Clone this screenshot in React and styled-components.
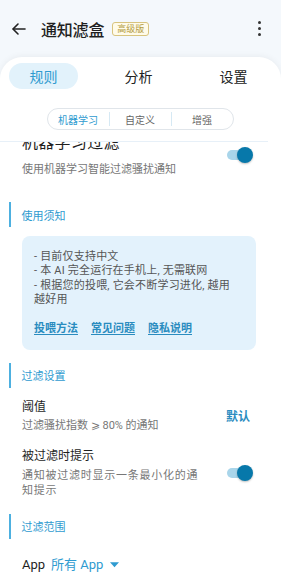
import React, { useLayoutEffect, useRef } from "react";
import styled, { createGlobalStyle } from "styled-components";

const GlobalStyle = createGlobalStyle`
  html, body {
    margin: 0;
    padding: 0;
    background: #f4f8fc;
    font-family: "Roboto", "Noto Sans CJK SC", sans-serif;
  }
  * { box-sizing: border-box; }
`;

const Toggle = () => (
  <Switch>
    <Track />
    <Thumb />
  </Switch>
);

export default function App() {
  const scrollRef = useRef(null);

  useLayoutEffect(() => {
    if (scrollRef.current) scrollRef.current.scrollTop = 10;
  }, []);

  return (
    <Page>
      <GlobalStyle />
      <TopBar>
        <IconButton>
          <svg width="16" height="16" viewBox="0 0 24 24" fill="none" stroke="#222" strokeWidth="2.4" strokeLinecap="round" strokeLinejoin="round">
            <path d="M21 12H3.5" />
            <path d="M10.5 4.5 3 12l7.5 7.5" />
          </svg>
        </IconButton>
        <Title>通知滤盒</Title>
        <Badge>高级版</Badge>
        <Spacer />
        <MenuDots>
          <span />
          <span />
          <span />
        </MenuDots>
      </TopBar>

      <Card>
        <Header>
          <Tabs>
            <Tab active>规则</Tab>
            <Tab>分析</Tab>
            <Tab>设置</Tab>
          </Tabs>
          <Segmented>
            <Segment active>机器学习</Segment>
            <Divider />
            <Segment>自定义</Segment>
            <Divider />
            <Segment>增强</Segment>
          </Segmented>
        </Header>

        <Scroll ref={scrollRef}>
          <List>
            <Row>
              <RowText>
                <BigTitle>机器学习过滤</BigTitle>
                <Sub gap={8}>使用机器学习智能过滤骚扰通知</Sub>
              </RowText>
              <Toggle />
            </Row>

            <Section top={25}>使用须知</Section>

            <InfoBox>
              <InfoText>
                - 目前仅支持中文
                <br />- 本 AI 完全运行在手机上, 无需联网
                <br />- 根据您的投喂, 它会不断学习进化, 越用越好用
              </InfoText>
              <Links>
                <LinkText>投喂方法</LinkText>
                <LinkText>常见问题</LinkText>
                <LinkText>隐私说明</LinkText>
              </Links>
            </InfoBox>

            <Section top={13}>过滤设置</Section>

            <Row top={11}>
              <RowText>
                <ItemTitle>阈值</ItemTitle>
                <Sub gap={3}>过滤骚扰指数 ⩾ 80% 的通知</Sub>
              </RowText>
              <Action>默认</Action>
            </Row>

            <Row top={15}>
              <RowText narrow>
                <ItemTitle>被过滤时提示</ItemTitle>
                <Sub gap={4} wide>通知被过滤时显示一条最小化的通知提示</Sub>
              </RowText>
              <Toggle />
            </Row>

            <Section top={16}>过滤范围</Section>

            <AppRow>
              <span>App</span>
              <Picker>
                所有 App
                <svg width="9" height="6" viewBox="0 0 10 6">
                  <path d="M0 0h10L5 5.5z" fill="#2f9bd0" />
                </svg>
              </Picker>
            </AppRow>
            <BottomRule />
          </List>
        </Scroll>
      </Card>
    </Page>
  );
}

const Page = styled.div`
  height: 100vh;
  display: flex;
  flex-direction: column;
  overflow: hidden;
`;

const TopBar = styled.div`
  height: 57px;
  flex-shrink: 0;
  display: flex;
  align-items: center;
  padding: 0 12px 0 10px;
`;

const IconButton = styled.div`
  width: 18px;
  height: 18px;
  display: flex;
  align-items: center;
  justify-content: center;
  margin-right: 13px;
`;

const Title = styled.div`
  font-size: 16px;
  font-weight: 500;
  color: #1f1f1f;
  letter-spacing: -0.2px;
`;

const Badge = styled.div`
  margin-left: 8px;
  border: 1px solid #d8c47e;
  background: #fffbe9;
  color: #b49b42;
  border-radius: 3px;
  font-size: 9px;
  line-height: 12px;
  padding: 0 4px;
`;

const Spacer = styled.div`
  flex: 1;
`;

const MenuDots = styled.div`
  display: flex;
  flex-direction: column;
  gap: 2.5px;
  margin-right: 8px;
  span {
    width: 3.5px;
    height: 3.5px;
    border-radius: 50%;
    background: #333;
  }
`;

const Card = styled.div`
  flex: 1;
  min-height: 0;
  background: #fff;
  border-radius: 22px 22px 0 0;
  box-shadow: 0 -1px 6px rgba(0, 0, 0, 0.05);
  display: flex;
  flex-direction: column;
  overflow: hidden;
`;

const Header = styled.div`
  flex-shrink: 0;
  padding: 6px 0 11px;
  margin-right: 13px;
  border-bottom: 1px solid #e7f0f8;
`;

const Tabs = styled.div`
  display: flex;
  justify-content: space-between;
  padding-left: 9px;
`;

const Tab = styled.div`
  width: 69px;
  height: 26px;
  border-radius: 13px;
  display: flex;
  align-items: center;
  justify-content: center;
  font-size: 14px;
  color: ${(p) => (p.active ? "#2f9bd0" : "#222")};
  background: ${(p) => (p.active ? "#e2f2fb" : "transparent")};
`;

const Segmented = styled.div`
  width: 187px;
  height: 22px;
  margin: 19px auto 0;
  border: 1px solid #e0e5ea;
  border-radius: 11px;
  display: flex;
  align-items: center;
  position: relative;
  left: 6px;
`;

const Segment = styled.div`
  flex: 1;
  text-align: center;
  font-size: 10px;
  color: ${(p) => (p.active ? "#2f9bd0" : "#666")};
`;

const Divider = styled.div`
  width: 1px;
  height: 14px;
  background: #d6e9f4;
`;

const Scroll = styled.div`
  flex: 1;
  min-height: 0;
  overflow: hidden;
`;

const List = styled.div`
  padding-bottom: 40px;
`;

const Row = styled.div`
  display: flex;
  align-items: center;
  justify-content: space-between;
  padding: 0 28px 0 22px;
  margin-top: ${(p) => p.top || 0}px;
`;

const RowText = styled.div`
  display: flex;
  flex-direction: column;
  max-width: ${(p) => (p.narrow ? "182px" : "none")};
`;

const BigTitle = styled.div`
  font-size: 16px;
  line-height: 22px;
  color: #1f1f1f;
  letter-spacing: 0.3px;
`;

const ItemTitle = styled.div`
  font-size: 12px;
  line-height: 16px;
  color: #1f1f1f;
`;

const Sub = styled.div`
  margin-top: ${(p) => p.gap}px;
  font-size: 11px;
  letter-spacing: ${(p) => (p.wide ? "0.75px" : "0")};
  line-height: 15px;
  color: #777;
`;

const Switch = styled.div`
  position: relative;
  width: 26px;
  height: 16px;
  flex-shrink: 0;
`;

const Track = styled.div`
  position: absolute;
  left: 0;
  top: 3px;
  width: 23px;
  height: 10.5px;
  border-radius: 6px;
  background: #a9d5ea;
`;

const Thumb = styled.div`
  position: absolute;
  right: 0;
  top: 0;
  width: 16px;
  height: 16px;
  border-radius: 50%;
  background: #0778aa;
  box-shadow: 0 1px 2px rgba(0, 0, 0, 0.25);
`;

const Section = styled.div`
  margin-top: ${(p) => p.top}px;
  margin-left: 9px;
  height: 25px;
  border-left: 2.5px solid #4db0e0;
  padding-left: 10.5px;
  display: flex;
  align-items: center;
  font-size: 11px;
  color: #2f9bd0;
`;

const InfoBox = styled.div`
  margin: 9px 25px 0 22px;
  background: #e3f2fc;
  border-radius: 8px;
  padding: 14px 20px 14px 12px;
`;

const InfoText = styled.div`
  font-size: 11px;
  line-height: 14.4px;
  color: #555;
  letter-spacing: 0.2px;
`;

const Links = styled.div`
  display: flex;
  gap: 13px;
  margin-top: 13px;
`;

const LinkText = styled.span`
  font-size: 11px;
  line-height: 15px;
  font-weight: 600;
  color: #2a8cbf;
  text-decoration: underline;
  text-underline-offset: 2px;
`;

const Action = styled.div`
  font-size: 12px;
  font-weight: 700;
  color: #2a8cbf;
  margin-right: 3px;
`;

const AppRow = styled.div`
  margin-top: 17px;
  padding-left: 22px;
  display: flex;
  align-items: center;
  gap: 6px;
  font-size: 13px;
  line-height: 18px;
  color: #1f1f1f;
`;

const Picker = styled.span`
  display: inline-flex;
  align-items: center;
  gap: 7px;
  color: #2f9bd0;
`;

const BottomRule = styled.div`
  margin-top: 6px;
  border-top: 1px solid #eef2f5;
`;
